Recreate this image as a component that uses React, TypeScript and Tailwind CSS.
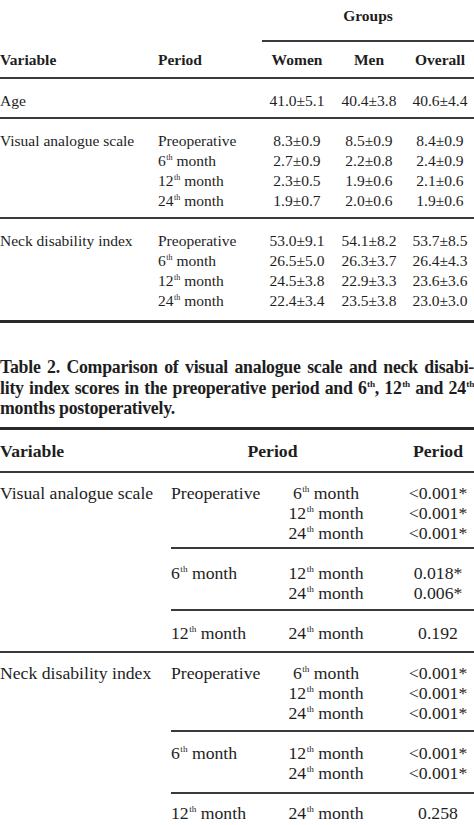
import type { ReactNode } from "react";

const th = (n: string): ReactNode => (
  <>
    {n}
    <sup className="ml-[0.5px] text-[0.52em] -top-[0.75em]">th</sup>
  </>
);

const month = (n: string): ReactNode => (
  <>
    {th(n)} month
  </>
);

type Row1 = { period: ReactNode; women: string; men: string; overall: string };

const vasRows: Row1[] = [
  { period: "Preoperative", women: "8.3±0.9", men: "8.5±0.9", overall: "8.4±0.9" },
  { period: month("6"), women: "2.7±0.9", men: "2.2±0.8", overall: "2.4±0.9" },
  { period: month("12"), women: "2.3±0.5", men: "1.9±0.6", overall: "2.1±0.6" },
  { period: month("24"), women: "1.9±0.7", men: "2.0±0.6", overall: "1.9±0.6" },
];

const ndiRows: Row1[] = [
  { period: "Preoperative", women: "53.0±9.1", men: "54.1±8.2", overall: "53.7±8.5" },
  { period: month("6"), women: "26.5±5.0", men: "26.3±3.7", overall: "26.4±4.3" },
  { period: month("12"), women: "24.5±3.8", men: "22.9±3.3", overall: "23.6±3.6" },
  { period: month("24"), women: "22.4±3.4", men: "23.5±3.8", overall: "23.0±3.0" },
];

const cols1 = "grid grid-cols-[158px_104px_70px_74px_68px]";

function Table1Group({ label, rows, className }: { label: string; rows: Row1[]; className: string }) {
  return (
    <div className={className}>
      {rows.map((r, i) => (
        <div key={i} className={`${cols1} h-[20px] leading-[20px]`}>
          <div className="whitespace-nowrap">{i === 0 ? label : ""}</div>
          <div className="whitespace-nowrap">{r.period}</div>
          <div className="text-center">{r.women}</div>
          <div className="text-center">{r.men}</div>
          <div className="text-center">{r.overall}</div>
        </div>
      ))}
    </div>
  );
}

type Sub = { from: ReactNode; rows: { to: ReactNode; p: string }[]; className: string };

const cols2 = "grid grid-cols-[107px_96px_28px_72px]";

function Table2Group({ label, labelPad, subs, className }: { label: string; labelPad: string; subs: Sub[]; className: string }) {
  return (
    <div className={`flex ${className}`}>
      <div className={`w-[171px] shrink-0 whitespace-nowrap leading-[20px] ${labelPad}`}>{label}</div>
      <div className="flex flex-1 flex-col">
        {subs.map((s, i) => (
          <div key={i} className={s.className}>
            {s.rows.map((r, j) => (
              <div key={j} className={`${cols2} h-[20px] leading-[20px]`}>
                <div className="whitespace-nowrap">{j === 0 ? s.from : ""}</div>
                <div className="whitespace-nowrap text-center">{r.to}</div>
                <div />
                <div className="whitespace-nowrap text-center">{r.p}</div>
              </div>
            ))}
          </div>
        ))}
      </div>
    </div>
  );
}

export default function App() {
  return (
    <div className="h-[825px] w-[474px] overflow-hidden bg-white font-['Liberation_Serif','Times_New_Roman',serif] text-[#1e1e1e]">
      {/* Table 1 */}
      <div className="text-[15.5px]">
        <div className="grid grid-cols-[262px_212px]">
          <div />
          <div className="border-b-2 border-[#3a3a3a] pb-[14px] pt-[6px] text-center font-bold leading-[20px]">Groups</div>
        </div>
        <div className={`${cols1} border-b-2 border-[#3a3a3a] pb-[7px] pt-[8px] font-bold leading-[20px]`}>
          <div>Variable</div>
          <div>Period</div>
          <div className="text-center">Women</div>
          <div className="text-center">Men</div>
          <div className="text-center">Overall</div>
        </div>
        <div className={`${cols1} border-b-2 border-[#3a3a3a] pb-[6px] pt-[12px] leading-[20px]`}>
          <div>Age</div>
          <div />
          <div className="text-center">41.0±5.1</div>
          <div className="text-center">40.4±3.8</div>
          <div className="text-center">40.6±4.4</div>
        </div>
        <Table1Group label="Visual analogue scale" rows={vasRows} className="border-b-2 border-[#3a3a3a] pb-[6px] pt-[12px]" />
        <Table1Group label="Neck disability index" rows={ndiRows} className="border-b-[3px] border-[#2a2a2a] pb-[9px] pt-[12px]" />
      </div>

      {/* Caption */}
      <div className="mt-[34px] text-[17.8px] font-bold leading-[20.5px] tracking-[-0.25px]">
        <div className="whitespace-nowrap [text-align-last:justify]">
          Table 2. Comparison of visual analogue scale and neck disabi-
        </div>
        <div className="whitespace-nowrap [text-align-last:justify]">
          lity index scores in the preoperative period and {th("6")}, {th("12")} and {th("24")}
        </div>
        <div className="whitespace-nowrap">months postoperatively.</div>
      </div>

      {/* Table 2 */}
      <div className="mt-[8px] border-t-[3px] border-[#2a2a2a] text-[17.7px]">
        <div className="grid grid-cols-[171px_203px_28px_72px] border-b-2 border-[#3a3a3a] pb-[10px] pt-[11px] font-bold leading-[20px]">
          <div>Variable</div>
          <div className="text-center">Period</div>
          <div />
          <div className="text-center">Period</div>
        </div>
        <Table2Group
          label="Visual analogue scale"
          labelPad="pt-[10px]"
          className="border-b-2 border-[#3a3a3a]"
          subs={[
            {
              from: "Preoperative",
              className: "border-b-2 border-[#3a3a3a] pb-[4px] pt-[10px]",
              rows: [
                { to: month("6"), p: "<0.001*" },
                { to: month("12"), p: "<0.001*" },
                { to: month("24"), p: "<0.001*" },
              ],
            },
            {
              from: month("6"),
              className: "border-b-2 border-[#3a3a3a] pb-[6px] pt-[14px]",
              rows: [
                { to: month("12"), p: "0.018*" },
                { to: month("24"), p: "0.006*" },
              ],
            },
            {
              from: month("12"),
              className: "pb-[8px] pt-[12px]",
              rows: [{ to: month("24"), p: "0.192" }],
            },
          ]}
        />
        <Table2Group
          label="Neck disability index"
          labelPad="pt-[10px]"
          className=""
          subs={[
            {
              from: "Preoperative",
              className: "border-b-2 border-[#3a3a3a] pb-[7px] pt-[10px]",
              rows: [
                { to: month("6"), p: "<0.001*" },
                { to: month("12"), p: "<0.001*" },
                { to: month("24"), p: "<0.001*" },
              ],
            },
            {
              from: month("6"),
              className: "border-b-2 border-[#3a3a3a] pb-[9px] pt-[11px]",
              rows: [
                { to: month("12"), p: "<0.001*" },
                { to: month("24"), p: "<0.001*" },
              ],
            },
            {
              from: month("12"),
              className: "pb-[8px] pt-[9px]",
              rows: [{ to: month("24"), p: "0.258" }],
            },
          ]}
        />
      </div>
    </div>
  );
}
